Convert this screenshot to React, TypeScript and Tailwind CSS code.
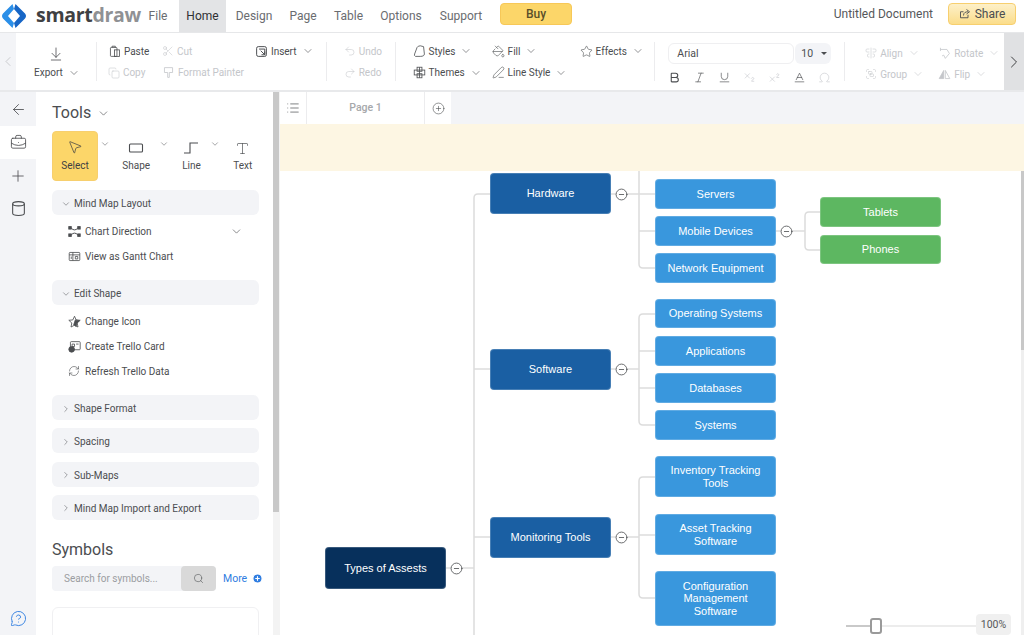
import React from 'react'
import {
  AlignCenterVertical, ArrowDownToLine, ArrowLeft, Baseline, Bold, BriefcaseBusiness, ChevronDown, ChevronLeft, ChevronRight,
  Copy, Group, Italic, List, MessageCircleQuestion, MinusCircle, MousePointer2, Omega, PaintBucket, PenLine, Plus, PlusCircle,
  Redo2, RefreshCw, Scissors, Search, Star, Subscript, Superscript, Type, Underline, Undo2,
} from 'lucide-react'

const font = { fontFamily: 'Roboto, sans-serif' }

function Ico({ children, size = 13, sw = 1 }: any) {
  return (
    <svg width={size} height={size} viewBox="0 0 16 16" fill="none" stroke="currentColor" strokeWidth={sw} className="shrink-0">
      {children}
    </svg>
  )
}

function ToolBtn({ icon, label, caret, off, className }: any) {
  return (
    <div className={`flex items-center gap-[3px] text-[10px] whitespace-nowrap ${off ? 'text-[#c4c6ca]' : 'text-[#4b4d50]'} ${className || ''}`}>
      {icon}
      <span>{label}</span>
      {caret && <ChevronDown size={12} strokeWidth={1.2} className="ml-[2px]" />}
    </div>
  )
}

function SectionHead({ label, open }: { label: string; open?: boolean }) {
  return (
    <div className="h-[25px] bg-[#f3f4f7] rounded-md flex items-center pl-[9px] pt-[2px] text-[10px] text-[#4b4d50]">
      {open ? <ChevronDown size={10} strokeWidth={1.2} className="mr-[3px]" /> : <ChevronRight size={10} strokeWidth={1.2} className="mr-[3px]" />}
      <span>{label}</span>
    </div>
  )
}

function PanelRow({ icon, label, caret }: any) {
  return (
    <div className="h-[25px] flex items-center pl-[16px] pr-[16px] pt-[2px] text-[10px] text-[#4b4d50]">
      <span className="w-[17px] flex">{icon}</span>
      <span className="flex-1">{label}</span>
      {caret && <ChevronDown size={13} strokeWidth={1.2} />}
    </div>
  )
}

function ToolItem({ icon, label, w, caretClass }: any) {
  return (
    <div className={`relative flex flex-col items-center text-[10px] text-[#4b4d50] ${w}`}>
      <span className="h-[16px] flex items-center">{icon}</span>
      <span className="mt-[2px]">{label}</span>
      {caretClass && <ChevronDown size={10} strokeWidth={1.2} className={`absolute top-[-1px] ${caretClass}`} />}
    </div>
  )
}

// diagram nodes sit on a free canvas, so they are placed by coordinates
const nodes = [
  { t: 'Types of Assests', x: 45, y: 376, w: 121, h: 42, c: 'bg-[#07305c]', bold: true },
  { t: 'Hardware', x: 210, y: 2, w: 121, h: 41, c: 'bg-[#1a5fa3]' },
  { t: 'Software', x: 210, y: 178, w: 121, h: 41, c: 'bg-[#1a5fa3]' },
  { t: 'Monitoring Tools', x: 210, y: 346, w: 121, h: 41, c: 'bg-[#1a5fa3]' },
  { t: 'Servers', x: 375, y: 8, w: 121, h: 30, c: 'bg-[#3997dd]' },
  { t: 'Mobile Devices', x: 375, y: 45, w: 121, h: 30, c: 'bg-[#3997dd]' },
  { t: 'Network Equipment', x: 375, y: 82, w: 121, h: 30, c: 'bg-[#3997dd]' },
  { t: 'Tablets', x: 540, y: 26, w: 121, h: 30, c: 'bg-[#5db761]' },
  { t: 'Phones', x: 540, y: 64, w: 121, h: 29, c: 'bg-[#5db761]' },
  { t: 'Operating Systems', x: 375, y: 128, w: 121, h: 29, c: 'bg-[#3997dd]' },
  { t: 'Applications', x: 375, y: 165, w: 121, h: 30, c: 'bg-[#3997dd]' },
  { t: 'Databases', x: 375, y: 202, w: 121, h: 30, c: 'bg-[#3997dd]' },
  { t: 'Systems', x: 375, y: 239, w: 121, h: 30, c: 'bg-[#3997dd]' },
  { t: 'Inventory Tracking Tools', x: 375, y: 285, w: 121, h: 41, c: 'bg-[#3997dd]' },
  { t: 'Asset Tracking Software', x: 375, y: 343, w: 121, h: 41, c: 'bg-[#3997dd]' },
  { t: 'Configuration Management Software', x: 375, y: 400, w: 121, h: 55, c: 'bg-[#3997dd]' },
]

const toggles = [
  [176, 397], [341, 23], [341, 198], [341, 366], [506, 60],
]

function Connectors() {
  const paths = [
    'M166 397H194', 'M194 464V27Q194 23 198 23H210',
    'M194 198H210', 'M194 366H210',
    'M331 23H375', 'M359 0V93Q359 97 363 97H375', 'M359 60H375',
    'M496 60H525', 'M525 45Q525 41 529 41H540', 'M525 45V75Q525 79 529 79H540',
    'M331 198H359', 'M359 147Q359 143 363 143H375', 'M359 147V250Q359 254 363 254H375', 'M359 180H375', 'M359 217H375',
    'M331 366H359', 'M359 310Q359 306 363 306H375', 'M359 310V423Q359 427 363 427H375', 'M359 364H375',
  ]
  return (
    <svg className="absolute left-0 top-0" width="744" height="464" fill="none" stroke="#dcdcdc" strokeWidth="1.5">
      {paths.map((d, i) => <path key={i} d={d} />)}
    </svg>
  )
}

export default function App() {
  return (
    <div style={font} className="w-[1024px] h-[635px] overflow-hidden bg-white flex flex-col text-[#4b4d50]">
      {/* Top menu */}
      <header className="h-[33px] flex items-center border-b border-[#e6e7e9] shrink-0">
        <svg width="24" height="26" viewBox="0 0 24 26" className="ml-[2px] -mt-[1px] shrink-0">
          <path d="M10.500 1 1 10.500q-2 2.500 0 5L10.500 25l1.500-5-6-7 6-7z" fill="#2b8fe8" />
          <path d="M13.500 1 23 10.500q2 2.500 0 5L13.500 25 12 20l6-7-6-7z" fill="#1766c6" />
        </svg>
        <div className="ml-[10px] w-[105px] text-[19.500px] font-bold leading-none tracking-[-0.3px] -mt-[2px]" style={{ fontFamily: '"Open Sans", sans-serif' }}>
          <span className="text-[#3f4042]">smart</span><span className="text-[#8f9194]">draw</span>
        </div>
        <nav className="flex h-full items-center text-[12px] text-[#6a6c70] shrink-0">
          <span className="w-[34px] text-center">File</span>
          <span className="w-[47px] ml-[4px] h-full bg-[#e3e4e6] text-[#2f3033] flex items-center justify-center">Home</span>
          <span className="w-[56px] text-center">Design</span>
          <span className="w-[42px] text-center">Page</span>
          <span className="w-[49px] text-center">Table</span>
          <span className="w-[56px] text-center">Options</span>
          <span className="w-[64px] text-center">Support</span>
        </nav>
        <div className="ml-[7px] w-[72px] h-[22px] -mt-[5px] rounded bg-[#fcd669] border border-[#f7c858] text-[12px] font-medium text-[#5a4f2a] flex items-center justify-center">Buy</div>
        <div className="ml-auto text-[12px] text-[#55575a] -mt-[4px]">Untitled Document</div>
        <div className="ml-[15px] mr-[8px] w-[68px] h-[22px] -mt-[5px] rounded bg-gradient-to-b from-[#fdf0c8] to-[#fbdd8a] border border-[#f7cf6e] flex items-center justify-center gap-[4px] text-[12px] text-[#4b4d50]">
          <Ico size={12} sw={1.2}><path d="M12 9v4H2V5h4" /><path d="M6 10c0-4 3-5 6-5M10 2l4 3-4 3" /></Ico> Share
        </div>
      </header>

      {/* Ribbon */}
      <div className="h-[59px] flex border-b-2 border-[#e8e9eb] shrink-0">
        <div className="w-[16px] bg-[#f3f4f7] flex items-center justify-center"><ChevronLeft size={17} strokeWidth={1} className="text-[#b5b7ba]" /></div>
        <div className="w-[80px] flex flex-col items-center pt-[13px]">
          <ArrowDownToLine size={16} strokeWidth={1.2} />
          <ToolBtn label="Export" caret className="mt-[3px] ml-[2px]" />
        </div>
        <div className="my-[9px] border-l border-[#ececee] w-[230px] pl-[11px] grid grid-cols-[54px_93px_auto] grid-rows-[18px_25px]">
          <ToolBtn icon={<Ico><rect x="3" y="3" width="8" height="11" rx="1" /><rect x="8" y="6" width="6" height="8" /><path d="M5 3V1.500h4V3" /></Ico>} label="Paste" />
          <ToolBtn icon={<Scissors size={12} strokeWidth={1.1} />} label="Cut" off />
          <ToolBtn icon={<Ico sw={1.2}><rect x="2" y="2" width="12" height="12" rx="2" /><path d="M5 5h7v7" /><path d="M7 7l5 5M12 8v4H8" /></Ico>} label="Insert" caret />
          <ToolBtn icon={<Copy size={12} strokeWidth={1.1} />} label="Copy" off />
          <ToolBtn icon={<Ico><path d="M3 2h10v6H9v6H7V8H3z" /></Ico>} label="Format Painter" off />
        </div>
        <div className="my-[9px] border-l border-[#ececee] w-[69px] pl-[17px] grid grid-rows-[18px_25px]">
          <ToolBtn icon={<Undo2 size={12} strokeWidth={1.1} />} label="Undo" off />
          <ToolBtn icon={<Redo2 size={12} strokeWidth={1.1} />} label="Redo" off />
        </div>
        <div className="my-[9px] border-l border-[#ececee] w-[260px] pl-[17px] grid grid-cols-[79px_88px_auto] grid-rows-[18px_25px]">
          <ToolBtn icon={<Ico><path d="M5 3q1-2 4-2l4 1 1 9q0 3-5 3H3q-2-1-1-3z" /></Ico>} label="Styles" caret />
          <ToolBtn icon={<PaintBucket size={13} strokeWidth={1.1} />} label="Fill" caret />
          <ToolBtn icon={<Star size={13} strokeWidth={1.1} />} label="Effects" caret />
          <ToolBtn icon={<Ico><rect x="5" y="1.500" width="6" height="5" /><rect x="5" y="9.500" width="6" height="5" /><rect x="1.500" y="5" width="13" height="6" /><path d="M8 1.500v13" /></Ico>} label="Themes" caret />
          <ToolBtn icon={<PenLine size={13} strokeWidth={1.1} />} label="Line Style" caret />
        </div>
        <div className="my-[9px] border-l border-[#ececee] w-[190px] pl-[13px] pt-[1px]">
          <div className="flex gap-[1px]">
            <div className="w-[126px] h-[21px] border border-[#efeff1] rounded-md text-[10.5px] flex items-center pl-[8px]">Arial</div>
            <div className="w-[36px] h-[21px] bg-[#f3f4f7] rounded-md text-[10.5px] flex items-center pl-[6px] gap-[8px]">10<span className="border-x-[3px] border-t-[3px] border-x-transparent border-t-[#4b4d50]" /></div>
          </div>
          <div className="flex items-center gap-[12px] mt-[7px]">
            <Bold size={13} strokeWidth={2} />
            <Italic size={13} strokeWidth={1.2} />
            <Underline size={13} strokeWidth={1.2} />
            <Subscript size={13} strokeWidth={1.1} className="text-[#c4c6ca]" />
            <Superscript size={13} strokeWidth={1.1} className="text-[#c4c6ca]" />
            <Baseline size={13} strokeWidth={1.2} />
            <Omega size={13} strokeWidth={1.1} className="text-[#c4c6ca]" />
          </div>
        </div>
        <div className="my-[9px] border-l border-[#ececee] w-[160px] pl-[20px] grid grid-cols-[73px_auto] grid-rows-[22px_20px]">
          <ToolBtn icon={<AlignCenterVertical size={12} strokeWidth={1.1} />} label="Align" caret off />
          <ToolBtn icon={<Ico><path d="M3 3h8l3 5-5 6-2-4-2 1" /><path d="M3 1v4" /></Ico>} label="Rotate" caret off />
          <ToolBtn icon={<Group size={12} strokeWidth={1.1} />} label="Group" caret off />
          <ToolBtn icon={<Ico><path d="M7 3 1.500 13H7z" fill="currentColor" /><path d="M9 3l5.500 10H9z" /></Ico>} label="Flip" caret off />
        </div>
        <div className="flex-1 bg-[#e0e1e3] flex items-center justify-center"><ChevronRight size={20} strokeWidth={1.2} className="text-[#3f4042]" /></div>
      </div>

      <div className="flex-1 flex min-h-0">
        {/* Rail */}
        <aside className="w-[36px] bg-[#f3f4f7] flex flex-col items-center shrink-0 relative">
          <div className="h-[34px] flex items-center"><ArrowLeft size={17} strokeWidth={1.2} /></div>
          <div className="h-[33px] w-full bg-white flex items-center justify-center"><BriefcaseBusiness size={17} strokeWidth={1.2} /></div>
          <div className="h-[33px] flex items-center"><Plus size={18} strokeWidth={1.1} /></div>
          <div className="h-[33px] flex items-center">
            <Ico size={17} sw={1}><ellipse cx="8" cy="3.500" rx="5.500" ry="2" /><path d="M2.500 3.500v9c0 1.100 2.500 2 5.500 2s5.500-.9 5.500-2v-9" /></Ico>
          </div>
          <MessageCircleQuestion size={17} strokeWidth={1.3} className="absolute top-[518px] text-[#2f7de1]" />
        </aside>

        {/* Tools panel */}
        <aside className="w-[237px] pl-[16px] pr-[14px] shrink-0 overflow-hidden">
          <div className="h-[39px] flex items-center gap-[6px] text-[16px] pt-[3px]">Tools <ChevronDown size={13} strokeWidth={1.2} /></div>
          <div className="flex h-[50px] items-start">
            <div className="relative w-[46px] h-[50px] bg-[#fcd669] border border-[#f7cf6e] rounded flex flex-col items-center pt-[7px] text-[10px] text-[#3f4042] shrink-0">
              <MousePointer2 size={16} strokeWidth={1.1} />
              <span className="mt-[3px]">Select</span>
              <ChevronDown size={10} strokeWidth={1.2} className="absolute -right-[13px] top-[7px] text-[#4b4d50]" />
            </div>
            <ToolItem icon={<Ico size={16} sw={1.1}><rect x="1.500" y="4" width="13" height="8" rx="1" /></Ico>} label="Shape" w="ml-[22px] w-[34px] mt-[9px]" caretClass="-right-[17px]" />
            <ToolItem icon={<Ico size={16} sw={1.1}><path d="M1 13h6V3h8" /></Ico>} label="Line" w="ml-[23px] w-[34px] mt-[9px]" caretClass="-right-[12px]" />
            <ToolItem icon={<Type size={15} strokeWidth={1.1} />} label="Text" w="ml-[19px] w-[34px] mt-[9px]" />
          </div>
          <div className="mt-[9px]">
            <SectionHead label="Mind Map Layout" open />
            <div className="py-[2.500px]">
              <PanelRow icon={<Ico sw={1.2}><rect x="1" y="2" width="3" height="3" fill="currentColor" /><rect x="12" y="2" width="3" height="3" fill="currentColor" /><rect x="1" y="11" width="3" height="3" fill="currentColor" /><rect x="12" y="11" width="3" height="3" fill="currentColor" /><path d="M4 4q4 4 8 0M4 12q4-4 8 0" /></Ico>} label="Chart Direction" caret />
              <PanelRow icon={<Ico><rect x="1.500" y="3" width="13" height="10" rx="1" /><path d="M1.500 6h13M6 3v10M9 8h3v3H9zM4 8v3" /></Ico>} label="View as Gantt Chart" />
            </div>
            <div className="mt-[10px]"><SectionHead label="Edit Shape" open /></div>
            <div className="py-[2.500px]">
              <PanelRow icon={<Ico><path d="M8 1.500 10 6l5 .5-3.700 3.300 1 5L8 12.500 3.700 14.800l1-5L1 6.500 6 6z" /><path d="M9 6l5 1-3 3-1 4-3-2z" fill="currentColor" /></Ico>} label="Change Icon" />
              <PanelRow icon={<Ico><rect x="3" y="2" width="12" height="10" rx="1" /><path d="M5 5h3v3H5zM10 5h3" /><circle cx="4.500" cy="11.500" r="3.500" fill="currentColor" /></Ico>} label="Create Trello Card" />
              <PanelRow icon={<RefreshCw size={12} strokeWidth={1.2} />} label="Refresh Trello Data" />
            </div>
            <div className="mt-[10px] flex flex-col gap-[8.330px]">
              <SectionHead label="Shape Format" />
              <SectionHead label="Spacing" />
              <SectionHead label="Sub-Maps" />
              <SectionHead label="Mind Map Import and Export" />
            </div>
          </div>
          <div className="mt-[19px] text-[16px] leading-[22px]">Symbols</div>
          <div className="mt-[5px] flex items-center">
            <div className="w-[164px] h-[25px] shrink-0 bg-[#f3f4f7] rounded flex items-center pl-[12px] pt-[1px] text-[10px] text-[#9b9da1] relative">
              Search for symbols...
              <div className="absolute right-0 top-0 w-[35px] h-[25px] bg-[#d9d9d9] rounded flex items-center justify-center">
                <Search size={11} strokeWidth={1.3} className="text-[#55575a]" />
              </div>
            </div>
            <span className="ml-[7px] text-[10.5px] text-[#2f7de1]">More</span>
            <PlusCircle size={11} fill="#2f7de1" stroke="white" strokeWidth={2.5} className="ml-[5px] shrink-0" />
          </div>
          <div className="mt-[16px] h-[60px] border border-[#f0f0f2] rounded-md" />
        </aside>

        {/* Panel scrollbar */}
        <div className="w-[7px] bg-[#f3f3f3] shrink-0">
          <div className="h-[420px] bg-[#c8c8c8] w-[6px]" />
        </div>

        {/* Canvas column */}
        <main className="flex-1 min-w-0 flex flex-col">
          <div className="h-[32px] flex bg-[#f3f4f7] shrink-0">
            <div className="w-[26px] bg-white flex items-center justify-center"><List size={14} strokeWidth={1.2} /></div>
            <div className="w-[118px] bg-white border-l border-[#ececee] flex items-center justify-center text-[10.5px] font-medium text-[#a6a8ab]">Page 1</div>
            <div className="w-[27px] bg-white border-l border-[#ececee] flex items-center justify-center"><PlusCircle size={13} strokeWidth={1.1} /></div>
          </div>
          <div className="h-[47px] bg-[#fdf6e3] shrink-0" />
          <div className="flex-1 relative overflow-hidden">
            <Connectors />
            {nodes.map((n) => (
              <div
                key={n.t}
                className={`absolute ${n.c} rounded flex items-center justify-center text-center text-white text-[11px] leading-[12.500px] px-[8px] border border-white/20 ${n.bold ? 'font-medium' : ''}`}
                style={{ left: n.x, top: n.y, width: n.w, height: n.h, fontFamily: '"Liberation Sans", sans-serif' }}
              >
                {n.t}
              </div>
            ))}
            {toggles.map(([x, y]) => (
              <MinusCircle key={`${x}-${y}`} size={13} strokeWidth={1.5} fill="white" className="absolute text-[#4b4d50]" style={{ left: x - 6.500, top: y - 6.500 }} />
            ))}
            {/* Canvas scrollbar */}
            <div className="absolute right-0 top-0 bottom-0 w-[3px] bg-[#efefef]">
              <div className="h-[179px] bg-[#c8c8c8]" />
            </div>
            {/* Zoom control */}
            <div className="absolute left-[566px] top-[454px] flex items-center">
              <div className="relative w-[130px] h-[2px] bg-[#ececec]">
                <div className="absolute left-0 top-0 h-[2px] w-[28px] bg-[#c9c9c9]" />
                <div className="absolute left-[24px] -top-[7px] w-[12px] h-[16px] bg-white border-2 border-[#9a9a9a] rounded-[3px]" />
              </div>
            </div>
            <div className="absolute left-[696px] top-[443px] w-[35px] h-[21px] bg-[#f0f0f0] rounded flex items-center justify-center text-[10.5px] text-[#55575a]">100%</div>
          </div>
        </main>
      </div>
    </div>
  )
}
